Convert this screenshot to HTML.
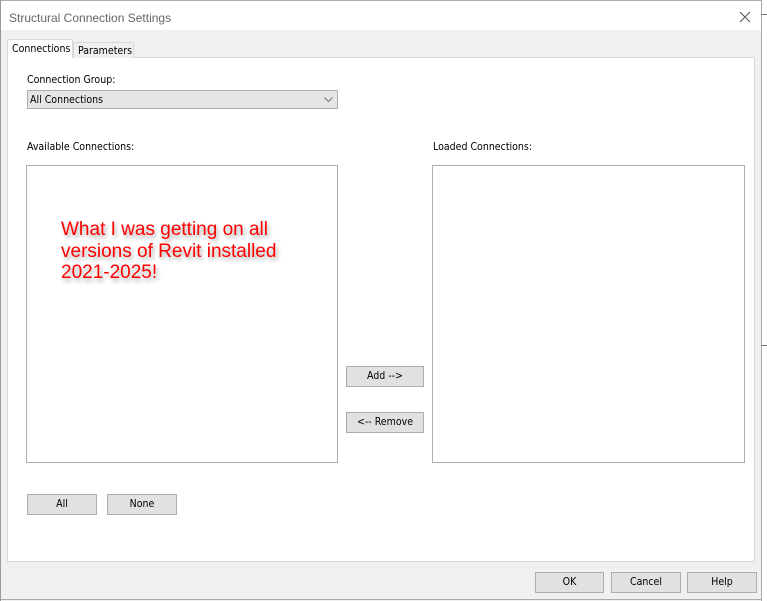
<!DOCTYPE html>
<html><head><style>
*{margin:0;padding:0;box-sizing:border-box}
body{width:767px;height:601px;position:relative;overflow:hidden;background:#f0f0f0;font-family:"DejaVu Sans Condensed","Liberation Sans",sans-serif;font-size:10.5px;color:#000}
.a{position:absolute}
.btn{position:absolute;background:#e1e1e1;border:1px solid #adadad;text-align:center;font-size:10.5px;line-height:19px;color:#000}
.lbl{position:absolute;font-size:10.5px;color:#000}
</style></head><body>
<div class="a" style="left:0;top:0;width:762px;height:601px;background:#f0f0f0;border-left:1px solid #999;border-right:1px solid #aaa"></div>
<div class="a" style="left:762px;top:0;width:5px;height:601px;background:#fff"></div>
<div class="a" style="left:761px;top:14px;width:6px;height:1px;background:#777"></div>
<div class="a" style="left:761px;top:345px;width:6px;height:1px;background:#777"></div>
<div class="a" style="left:1px;top:0;width:760px;height:30px;background:#fff;border-top:1px solid #aaa"></div>
<div class="a" style="left:9px;top:11px;font-family:'Liberation Sans',sans-serif;font-size:12px;color:#666">Structural Connection Settings</div>
<svg class="a" style="left:739px;top:11px" width="12" height="12"><path d="M1 1L11 11M11 1L1 11" stroke="#555" stroke-width="1"/></svg>
<div class="a" style="left:7px;top:57px;width:748px;height:505px;background:#fff;border:1px solid #d9d9d9"></div>
<div class="a" style="left:73px;top:42px;width:61px;height:16px;background:#f0f0f0;border:1px solid #d9d9d9;border-bottom:none"></div>
<div class="lbl" style="left:78px;top:45px">Parameters</div>
<div class="a" style="left:7px;top:39px;width:66px;height:19px;background:#fff;border:1px solid #d9d9d9;border-bottom:none"></div>
<div class="lbl" style="left:12px;top:43px">Connections</div>
<div class="lbl" style="left:27px;top:74px">Connection Group:</div>
<div class="a" style="left:27px;top:90px;width:311px;height:19px;background:#e5e5e5;border:1px solid #adadad"></div>
<div class="lbl" style="left:30px;top:94px">All Connections</div>
<svg class="a" style="left:324px;top:97px" width="9" height="6"><path d="M0.5 0.5L4.5 4.5L8.5 0.5" stroke="#777" fill="none"/></svg>
<div class="lbl" style="left:27px;top:141px">Available Connections:</div>
<div class="lbl" style="left:433px;top:141px">Loaded Connections:</div>
<div class="a" style="left:26px;top:165px;width:312px;height:298px;border:1px solid #adadad;background:#fff"></div>
<div class="a" style="left:432px;top:165px;width:313px;height:298px;border:1px solid #adadad;background:#fff"></div>
<div class="a" style="left:61px;top:219px;font-family:'Liberation Sans',sans-serif;font-size:19px;line-height:21.5px;color:#f00;text-shadow:2px 3px 4px rgba(0,0,0,.35)">What I was getting on all<br>versions of Revit installed<br>2021-2025!</div>
<div class="btn" style="left:346px;top:366px;width:78px;height:21px">Add --&gt;</div>
<div class="btn" style="left:346px;top:412px;width:78px;height:21px">&lt;-- Remove</div>
<div class="btn" style="left:27px;top:494px;width:70px;height:21px">All</div>
<div class="btn" style="left:107px;top:494px;width:70px;height:21px">None</div>
<div class="btn" style="left:535px;top:572px;width:69px;height:21px">OK</div>
<div class="btn" style="left:611px;top:572px;width:70px;height:21px">Cancel</div>
<div class="btn" style="left:687px;top:572px;width:70px;height:21px">Help</div>
<div class="a" style="left:1px;top:599px;width:760px;height:1px;background:#aaa"></div>
</body></html>
